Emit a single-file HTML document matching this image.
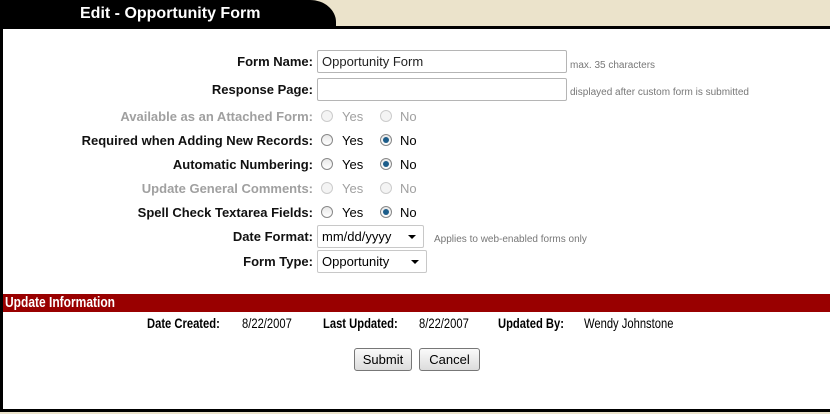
<!DOCTYPE html>
<html><head><style>
*{margin:0;padding:0;box-sizing:border-box}
body{width:830px;height:414px;background:#ebe3cb;position:relative;overflow:hidden;font-family:"Liberation Sans",Arial,sans-serif;font-size:13px;color:#000}
.tab{position:absolute;left:0;top:0;width:336px;height:28px;background:#000;border-top-right-radius:26px 22px}
.tab span{position:absolute;left:80px;top:5px;color:#fff;font-weight:bold;font-size:16px}
.box{position:absolute;left:0;top:26px;width:840px;height:386px;background:#fff;border:3px solid #000;border-right:none}
.lbl{position:absolute;right:517px;font-weight:bold;white-space:nowrap;color:#111}
.dis{color:#a0a0a0}
.inp{position:absolute;left:317px;width:250px;height:23px;border:1px solid #b5b5b5;border-radius:2px;padding:3px 4px;font-size:13px;color:#222}
.note{position:absolute;font-size:10px;color:#777;white-space:nowrap}
.r{position:absolute;width:12px;height:12px;border-radius:50%;border:1px solid #888;background:linear-gradient(#e8e8e8,#fff)}
.r.d{border-color:#ccc;background:#f4f4f4}
.r.c::after{content:"";position:absolute;left:2px;top:2px;width:6px;height:6px;border-radius:50%;background:#1d5d8a}
.t{position:absolute;white-space:nowrap}
.sel{position:absolute;left:317px;height:23px;border:1px solid #c8c8c8;border-radius:2px;padding:3px 4px;background:#fff}
.sel::after{content:"";position:absolute;right:7px;top:9px;border-left:4px solid transparent;border-right:4px solid transparent;border-top:4px solid #000}
.bar{position:absolute;left:3px;top:294px;width:827px;height:18px;background:#990000;color:#fff;font-size:15px;padding:0 2px;font-weight:bold}
.info{position:absolute;top:315px;font-size:14px;white-space:nowrap;transform:scaleX(0.8);transform-origin:left}
.btn{position:absolute;top:348px;height:23px;border:1px solid #777;border-radius:3px;background:linear-gradient(#fafafa,#dcdcdc);font-size:13px;text-align:center;line-height:21px}
</style></head><body>
<div class="tab"><span>Edit - Opportunity Form</span></div>
<div class="box"></div>

<div class="lbl" style="top:54px">Form Name:</div>
<div class="inp" style="top:50px">Opportunity Form</div>
<div class="note" style="left:570px;top:60px">max. 35 characters</div>

<div class="lbl" style="top:82px">Response Page:</div>
<div class="inp" style="top:78px"></div>
<div class="note" style="left:570px;top:87px">displayed after custom form is submitted</div>

<div class="lbl dis" style="top:109px">Available as an Attached Form:</div>
<div class="r d" style="left:321px;top:110px"></div><div class="t dis" style="left:342px;top:109px">Yes</div>
<div class="r d" style="left:380px;top:110px"></div><div class="t dis" style="left:400px;top:109px">No</div>

<div class="lbl" style="top:133px">Required when Adding New Records:</div>
<div class="r" style="left:321px;top:134px"></div><div class="t" style="left:342px;top:133px">Yes</div>
<div class="r c" style="left:380px;top:134px"></div><div class="t" style="left:400px;top:133px">No</div>

<div class="lbl" style="top:157px">Automatic Numbering:</div>
<div class="r" style="left:321px;top:158px"></div><div class="t" style="left:342px;top:157px">Yes</div>
<div class="r c" style="left:380px;top:158px"></div><div class="t" style="left:400px;top:157px">No</div>

<div class="lbl dis" style="top:181px">Update General Comments:</div>
<div class="r d" style="left:321px;top:182px"></div><div class="t dis" style="left:342px;top:181px">Yes</div>
<div class="r d" style="left:380px;top:182px"></div><div class="t dis" style="left:400px;top:181px">No</div>

<div class="lbl" style="top:205px">Spell Check Textarea Fields:</div>
<div class="r" style="left:321px;top:206px"></div><div class="t" style="left:342px;top:205px">Yes</div>
<div class="r c" style="left:380px;top:206px"></div><div class="t" style="left:400px;top:205px">No</div>

<div class="lbl" style="top:229px">Date Format:</div>
<div class="sel" style="top:225px;width:107px">mm/dd/yyyy</div>
<div class="note" style="left:434px;top:234px">Applies to web-enabled forms only</div>

<div class="lbl" style="top:254px">Form Type:</div>
<div class="sel" style="top:250px;width:110px">Opportunity</div>

<div class="bar"><span style="display:inline-block;transform:scaleX(0.8);transform-origin:left">Update Information</span></div>
<div class="info" style="left:147px"><b>Date Created:</b></div><div class="info" style="left:242px">8/22/2007</div>
<div class="info" style="left:323px"><b>Last Updated:</b></div><div class="info" style="left:419px">8/22/2007</div>
<div class="info" style="left:498px"><b>Updated By:</b></div><div class="info" style="left:584px">Wendy Johnstone</div>

<div class="btn" style="left:354px;width:58px">Submit</div>
<div class="btn" style="left:419px;width:61px">Cancel</div>
</body></html>
